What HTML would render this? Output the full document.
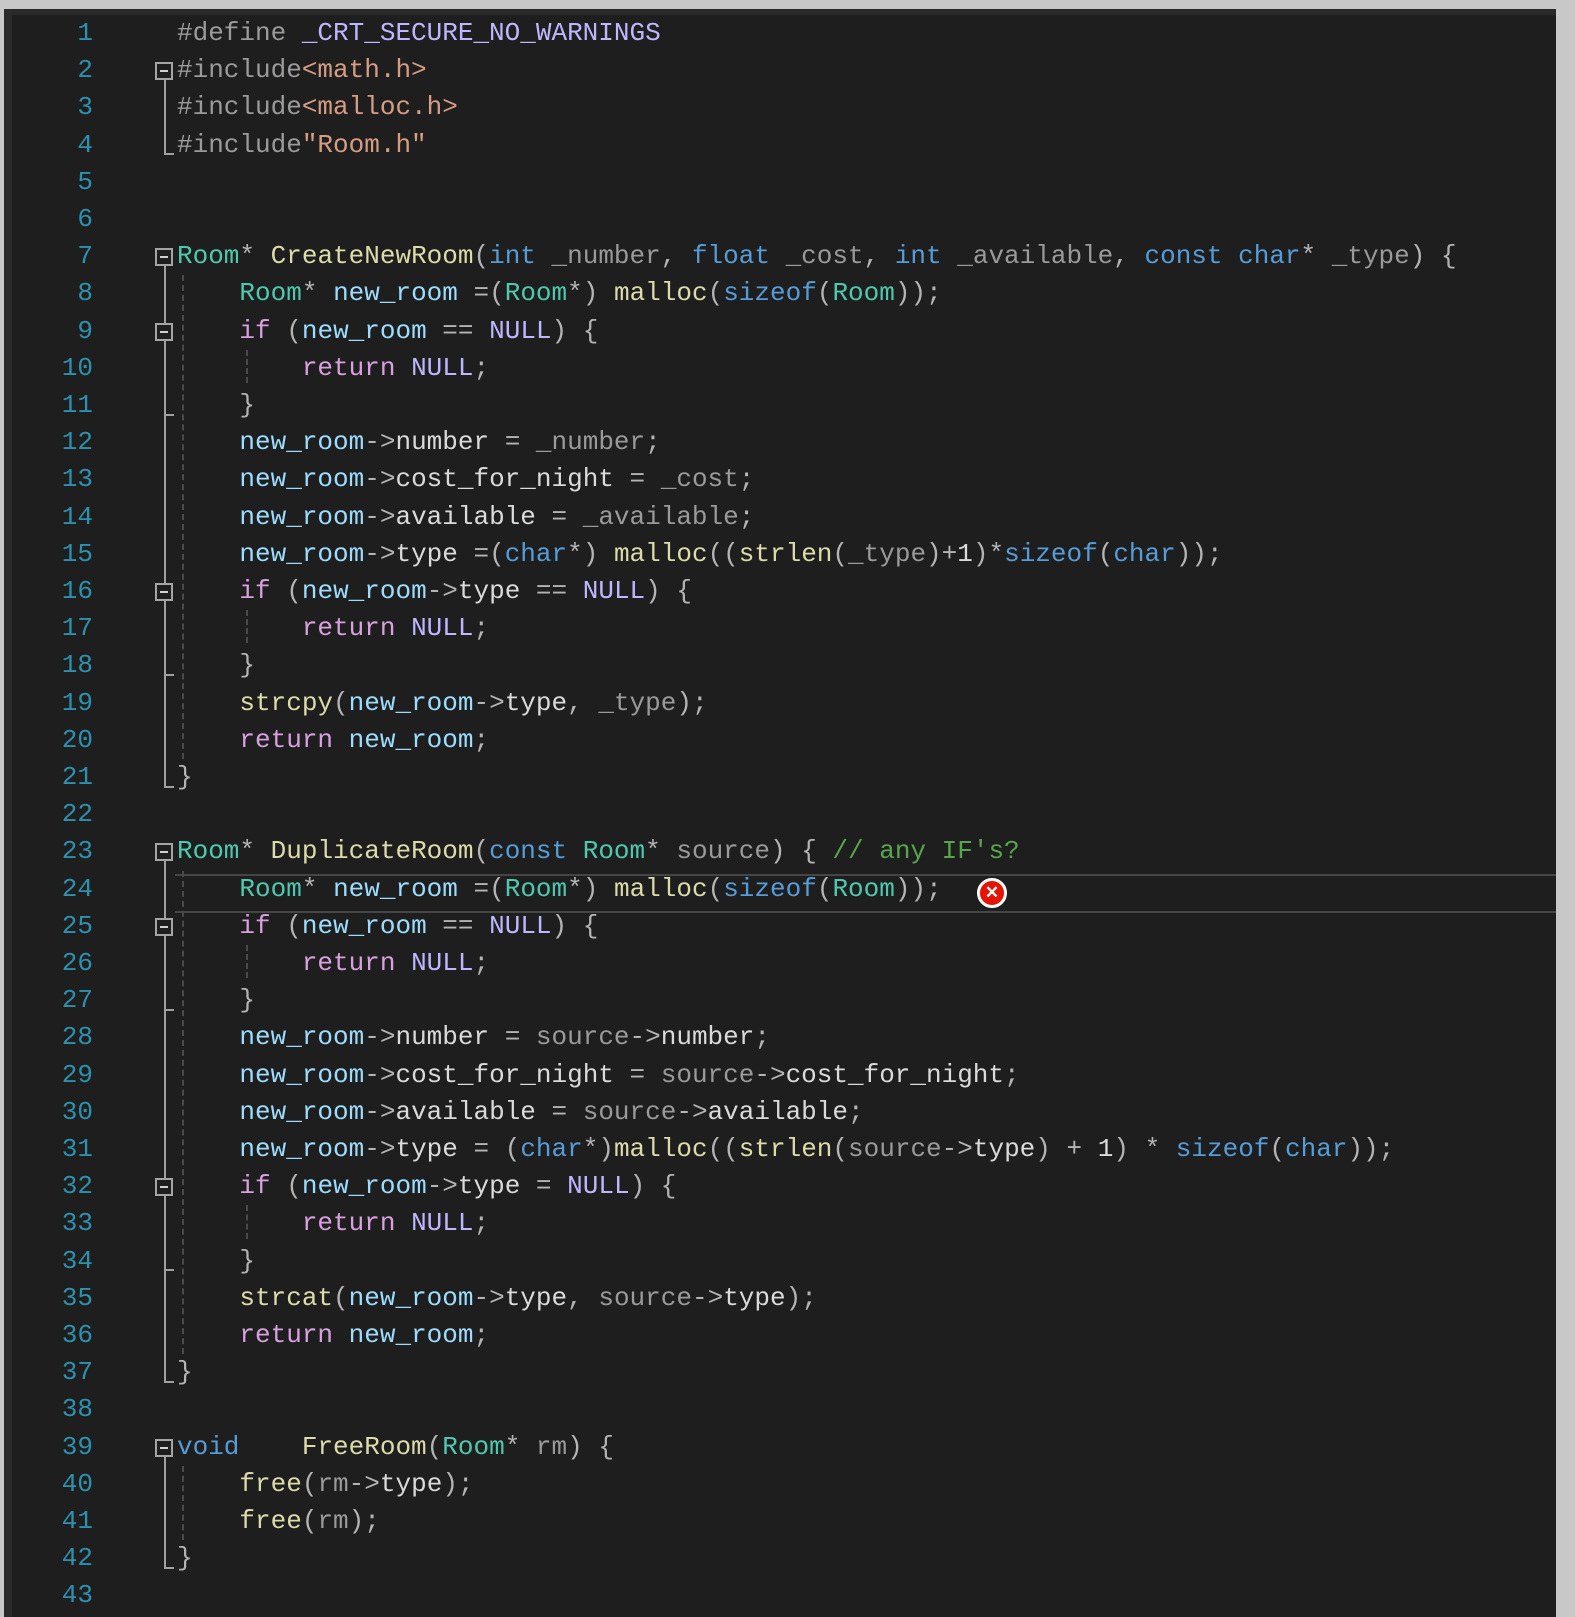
<!DOCTYPE html>
<html><head><meta charset="utf-8"><style>
html,body{margin:0;padding:0;}
body{width:1575px;height:1617px;background:#c8c8c8;position:relative;overflow:hidden;}
#ed{position:absolute;left:4px;top:9px;width:1552px;height:1608px;background:#1e1e1e;border-left:8px solid #2a2a2a;border-top:6px solid #2a2a2a;box-sizing:border-box;}
.ln,.cd{position:absolute;font-family:"Liberation Mono",monospace;font-size:26px;line-height:37px;height:37px;white-space:pre;}
.ln{color:#2b91af;width:93px;left:0;text-align:right;}
.cd{left:177px;color:#dadada;}
.p{color:#9b9b9b}.m{color:#beb7ff}.s{color:#d69d85}.t{color:#4ec9b0}.k{color:#569cd6}.f{color:#dcdcaa}.v{color:#9cdcfe}.g{color:#9a9a9a}.c{color:#d8a0df}.o{color:#b4b4b4}.cm{color:#57a64a}
.fb{position:absolute;left:155px;width:18px;height:18px;border:2px solid #a5a5a5;box-sizing:border-box;background:#1e1e1e;}
.fb:after{content:"";position:absolute;left:3px;top:6px;width:8px;height:2px;background:#d0d0d0;}
.vl{position:absolute;left:164px;width:2px;background:#a0a0a0;}
.tk{position:absolute;left:164px;width:10px;height:2px;background:#a0a0a0;}
.dg{position:absolute;width:0;border-left:2px dashed #4a4a4a;}
</style></head><body>
<div id="ed"></div>
<div id="lines"></div>
<script>
var L=[
'<span class="p">#define</span> <span class="m">_CRT_SECURE_NO_WARNINGS</span>',
'<span class="p">#include</span><span class="s">&lt;math.h&gt;</span>',
'<span class="p">#include</span><span class="s">&lt;malloc.h&gt;</span>',
'<span class="p">#include</span><span class="s">"Room.h"</span>',
'','',
'<span class="t">Room</span><span class="o">*</span> <span class="f">CreateNewRoom</span><span class="o">(</span><span class="k">int</span> <span class="g">_number</span><span class="o">,</span> <span class="k">float</span> <span class="g">_cost</span><span class="o">,</span> <span class="k">int</span> <span class="g">_available</span><span class="o">,</span> <span class="k">const</span> <span class="k">char</span><span class="o">*</span> <span class="g">_type</span><span class="o">)</span> <span class="o">{</span>',
'    <span class="t">Room</span><span class="o">*</span> <span class="v">new_room</span> <span class="o">=(</span><span class="t">Room</span><span class="o">*)</span> <span class="f">malloc</span><span class="o">(</span><span class="k">sizeof</span><span class="o">(</span><span class="t">Room</span><span class="o">));</span>',
'    <span class="c">if</span> <span class="o">(</span><span class="v">new_room</span> <span class="o">==</span> <span class="m">NULL</span><span class="o">)</span> <span class="o">{</span>',
'        <span class="c">return</span> <span class="m">NULL</span><span class="o">;</span>',
'    <span class="o">}</span>',
'    <span class="v">new_room</span><span class="o">-&gt;</span>number <span class="o">=</span> <span class="g">_number</span><span class="o">;</span>',
'    <span class="v">new_room</span><span class="o">-&gt;</span>cost_for_night <span class="o">=</span> <span class="g">_cost</span><span class="o">;</span>',
'    <span class="v">new_room</span><span class="o">-&gt;</span>available <span class="o">=</span> <span class="g">_available</span><span class="o">;</span>',
'    <span class="v">new_room</span><span class="o">-&gt;</span>type <span class="o">=(</span><span class="k">char</span><span class="o">*)</span> <span class="f">malloc</span><span class="o">((</span><span class="f">strlen</span><span class="o">(</span><span class="g">_type</span><span class="o">)+</span>1<span class="o">)*</span><span class="k">sizeof</span><span class="o">(</span><span class="k">char</span><span class="o">));</span>',
'    <span class="c">if</span> <span class="o">(</span><span class="v">new_room</span><span class="o">-&gt;</span>type <span class="o">==</span> <span class="m">NULL</span><span class="o">)</span> <span class="o">{</span>',
'        <span class="c">return</span> <span class="m">NULL</span><span class="o">;</span>',
'    <span class="o">}</span>',
'    <span class="f">strcpy</span><span class="o">(</span><span class="v">new_room</span><span class="o">-&gt;</span>type<span class="o">,</span> <span class="g">_type</span><span class="o">);</span>',
'    <span class="c">return</span> <span class="v">new_room</span><span class="o">;</span>',
'<span class="o">}</span>',
'',
'<span class="t">Room</span><span class="o">*</span> <span class="f">DuplicateRoom</span><span class="o">(</span><span class="k">const</span> <span class="t">Room</span><span class="o">*</span> <span class="g">source</span><span class="o">)</span> <span class="o">{</span> <span class="cm">// any IF\'s?</span>',
'    <span class="t">Room</span><span class="o">*</span> <span class="v">new_room</span> <span class="o">=(</span><span class="t">Room</span><span class="o">*)</span> <span class="f">malloc</span><span class="o">(</span><span class="k">sizeof</span><span class="o">(</span><span class="t">Room</span><span class="o">));</span>',
'    <span class="c">if</span> <span class="o">(</span><span class="v">new_room</span> <span class="o">==</span> <span class="m">NULL</span><span class="o">)</span> <span class="o">{</span>',
'        <span class="c">return</span> <span class="m">NULL</span><span class="o">;</span>',
'    <span class="o">}</span>',
'    <span class="v">new_room</span><span class="o">-&gt;</span>number <span class="o">=</span> <span class="g">source</span><span class="o">-&gt;</span>number<span class="o">;</span>',
'    <span class="v">new_room</span><span class="o">-&gt;</span>cost_for_night <span class="o">=</span> <span class="g">source</span><span class="o">-&gt;</span>cost_for_night<span class="o">;</span>',
'    <span class="v">new_room</span><span class="o">-&gt;</span>available <span class="o">=</span> <span class="g">source</span><span class="o">-&gt;</span>available<span class="o">;</span>',
'    <span class="v">new_room</span><span class="o">-&gt;</span>type <span class="o">=</span> <span class="o">(</span><span class="k">char</span><span class="o">*)</span><span class="f">malloc</span><span class="o">((</span><span class="f">strlen</span><span class="o">(</span><span class="g">source</span><span class="o">-&gt;</span>type<span class="o">)</span> <span class="o">+</span> 1<span class="o">)</span> <span class="o">*</span> <span class="k">sizeof</span><span class="o">(</span><span class="k">char</span><span class="o">));</span>',
'    <span class="c">if</span> <span class="o">(</span><span class="v">new_room</span><span class="o">-&gt;</span>type <span class="o">=</span> <span class="m">NULL</span><span class="o">)</span> <span class="o">{</span>',
'        <span class="c">return</span> <span class="m">NULL</span><span class="o">;</span>',
'    <span class="o">}</span>',
'    <span class="f">strcat</span><span class="o">(</span><span class="v">new_room</span><span class="o">-&gt;</span>type<span class="o">,</span> <span class="g">source</span><span class="o">-&gt;</span>type<span class="o">);</span>',
'    <span class="c">return</span> <span class="v">new_room</span><span class="o">;</span>',
'<span class="o">}</span>',
'',
'<span class="k">void</span>    <span class="f">FreeRoom</span><span class="o">(</span><span class="t">Room</span><span class="o">*</span> <span class="g">rm</span><span class="o">)</span> <span class="o">{</span>',
'    <span class="f">free</span><span class="o">(</span><span class="g">rm</span><span class="o">-&gt;</span>type<span class="o">);</span>',
'    <span class="f">free</span><span class="o">(</span><span class="g">rm</span><span class="o">);</span>',
'<span class="o">}</span>',
''];
var P=37.2,T0=15,h='';
function Y(n){return T0+(n-1)*P;}
h+='<div style="position:absolute;left:175px;top:'+(Y(24)+3)+'px;width:1381px;height:35px;border-top:2px solid #464646;border-bottom:2px solid #464646;"></div>';
h+='<div style="position:absolute;left:977px;top:878px;width:30px;height:30px;border-radius:50%;background:#e51400;border:3px solid #fff;box-sizing:border-box;color:#fff;font:bold 17px/24px \'Liberation Sans\',sans-serif;text-align:center;">✕</div>';
var F=[[2,4],[7,21],[9,11],[16,18],[23,37],[25,27],[32,34],[39,42]];
F.forEach(function(f){
 var ys=Y(f[0])+10, ye=Y(f[1])+P/2+8;
 h+='<div class="vl" style="top:'+(ys+18)+'px;height:'+(ye-ys-18)+'px"></div>';
 h+='<div class="tk" style="top:'+ye+'px"></div>';
 h+='<div class="fb" style="top:'+ys+'px"></div>';
});
[[8,20],[24,36],[40,41]].forEach(function(g){h+='<div class="dg" style="left:182px;top:'+Y(g[0])+'px;height:'+(P*(g[1]-g[0]+1))+'px"></div>';});
[10,17,26,33].forEach(function(n){h+='<div class="dg" style="left:246px;top:'+Y(n)+'px;height:'+(P-4)+'px"></div>';});
for(var i=0;i<43;i++){
 h+='<div class="ln" style="top:'+Y(i+1)+'px">'+(i+1)+'</div>';
 if(L[i])h+='<div class="cd" style="top:'+Y(i+1)+'px">'+L[i]+'</div>';
}
document.getElementById('lines').innerHTML=h;
</script>
</body></html>
